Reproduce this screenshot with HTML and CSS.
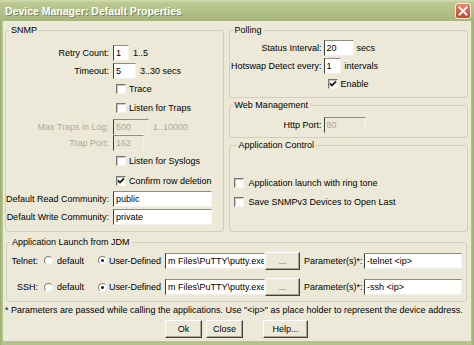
FILE: index.html
```html
<!DOCTYPE html>
<html lang="en">
<head>
  <meta charset="UTF-8" />
  <title>Device Manager: Default Properties</title>
  <link rel="stylesheet" href="styles.css">
</head>
<body>

  <div class="window">
    <div class="titlebar">
      <span class="title">Device Manager: Default Properties</span>
      <span class="close-btn">
        <svg width="10" height="10" viewBox="0 0 10 10"><path d="M1.5 1.5 L8.5 8.5 M8.5 1.5 L1.5 8.5" stroke="#fff" stroke-width="2" stroke-linecap="square"/></svg>
      </span>
    </div>

    <div class="client">
      <div class="top">
        <fieldset class="group snmp">
          <legend>SNMP</legend>
          <div class="form snmp-form">
            <span class="lbl">Retry Count:</span>
            <div class="field"><span class="txt w16">1</span><span class="hint">1..5</span></div>

            <span class="lbl">Timeout:</span>
            <div class="field"><span class="txt w23">5</span><span class="hint">3..30 secs</span></div>

            <span></span>
            <div class="field check"><span class="cb"></span>Trace</div>

            <span></span>
            <div class="field check"><span class="cb"></span>Listen for Traps</div>

            <span class="lbl disabled">Max Traps in Log:</span>
            <div class="field"><span class="txt w36 off">500</span><span class="hint disabled">1..10000</span></div>

            <span class="lbl disabled">Trap Port:</span>
            <div class="field"><span class="txt w31 off">162</span></div>

            <span></span>
            <div class="field check"><span class="cb"></span>Listen for Syslogs</div>

            <span></span>
            <div class="field check"><span class="cb checked"><svg width="8" height="8" viewBox="0 0 8 8"><path d="M1 3.5 L3 5.5 L7 1.5" stroke="#21211c" stroke-width="1.8" fill="none"/></svg></span>Confirm row deletion</div>

            <span class="lbl">Default Read Community:</span>
            <div class="field"><span class="txt w99">public</span></div>

            <span class="lbl">Default Write Community:</span>
            <div class="field"><span class="txt w99">private</span></div>
          </div>
        </fieldset>

        <div class="right-col">
          <fieldset class="group polling">
            <legend>Polling</legend>
            <div class="form polling-form">
              <span class="lbl">Status Interval:</span>
              <div class="field"><span class="txt w30">20</span><span class="hint h3">secs</span></div>

              <span class="lbl">Hotswap Detect every:</span>
              <div class="field"><span class="txt w17">1</span><span class="hint">intervals</span></div>

              <span></span>
              <div class="field check enable"><span class="cb checked"><svg width="8" height="8" viewBox="0 0 8 8"><path d="M1 3.5 L3 5.5 L7 1.5" stroke="#21211c" stroke-width="1.8" fill="none"/></svg></span>Enable</div>
            </div>
          </fieldset>

          <fieldset class="group web">
            <legend>Web Management</legend>
            <div class="form web-form">
              <span class="lbl">Http Port:</span>
              <div class="field"><span class="txt w42 off">80</span></div>
            </div>
          </fieldset>

          <fieldset class="group app">
            <legend>Application Control</legend>
            <div class="app-list">
              <div class="check"><span class="cb"></span>Application launch with ring tone</div>
              <div class="check"><span class="cb"></span>Save SNMPv3 Devices to Open Last</div>
            </div>
          </fieldset>
        </div>
      </div>

      <fieldset class="group launch">
        <legend>Application Launch from JDM</legend>
        <div class="launch-row">
          <span class="row-lbl">Telnet:</span>
          <span class="opt opt-default"><span class="radio"></span>default</span>
          <span class="opt opt-user"><span class="radio on"></span>User-Defined</span>
          <span class="txt path">m Files\PuTTY\putt<span class="caret"></span>y.exe</span>
          <span class="btn browse">...</span>
          <span class="param-lbl">Parameter(s)*:</span>
          <span class="txt param">-telnet &lt;ip&gt;</span>
        </div>
        <div class="launch-row second">
          <span class="row-lbl">SSH:</span>
          <span class="opt opt-default"><span class="radio"></span>default</span>
          <span class="opt opt-user"><span class="radio on"></span>User-Defined</span>
          <span class="txt path">m Files\PuTTY\putty.exe</span>
          <span class="btn browse">...</span>
          <span class="param-lbl">Parameter(s)*:</span>
          <span class="txt param">-ssh &lt;ip&gt;</span>
        </div>
      </fieldset>

      <p class="note">* Parameters are passed while calling the applications. Use "&lt;ip&gt;" as place holder to represent the device address.</p>

      <div class="buttons">
        <span class="btn ok">Ok</span>
        <span class="btn close">Close</span>
        <span class="btn help">Help...</span>
      </div>
    </div>
  </div>

</body>
</html>
```

FILE: styles.css
```css
* {
  box-sizing: border-box;
  margin: 0;
  padding: 0;
}

body {
  width: 474px;
  height: 345px;
  overflow: hidden;
  font-family: 'Liberation Sans', Arial, sans-serif;
  font-size: 9px;
  color: #000;
  background: #ece9d8;
}

.window {
  width: 474px;
  height: 345px;
  display: flex;
  flex-direction: column;
  background: linear-gradient(90deg, #98a86c 0, #b4c28b 2px, #b4c28b 471px, #98a86c 474px);
}

/* title bar */
.titlebar {
  height: 21px;
  flex: none;
  display: flex;
  align-items: center;
  justify-content: space-between;
  padding: 1px 3px 0 5px;
  background: linear-gradient(#d3dcb0 0, #bcc994 3px, #b2c089 12px, #a7b67d 21px);
}

.title {
  color: #fff;
  font-weight: bold;
  font-size: 10.5px;
  text-shadow: 1px 1px 0 #7b8a52;
}

.close-btn {
  width: 16px;
  height: 16px;
  display: flex;
  align-items: center;
  justify-content: center;
  border: 1px solid #f3eee0;
  border-radius: 3px;
  background: linear-gradient(#e98a6e, #d5573c 60%, #c4472f);
}

/* client area */
.client {
  flex: 1;
  margin: 0 3px 4px 3px;
  padding: 4px 3px 0 2px;
  background: #ece9d8;
  display: flex;
  flex-direction: column;
}

.top {
  display: flex;
  gap: 5px;
}

.group {
  border: 1px solid #d0d0bf;
  border-radius: 3px;
  min-width: 0;
}

.group legend {
  margin-left: 3px;
  padding: 0 2px;
  line-height: 11px;
}

.form {
  display: grid;
  align-items: center;
}

.lbl {
  text-align: right;
  white-space: nowrap;
}

.field {
  display: flex;
  align-items: center;
  gap: 4px;
}

.hint.h3 {
  margin-left: -1px;
}

.disabled {
  color: #aca899;
}

.check {
  display: flex;
  align-items: center;
  gap: 3px;
}

/* SNMP */
.snmp {
  width: 219px;
  padding: 8px 0 5px 0;
}

.snmp-form {
  grid-template-columns: 107px 1fr;
  grid-template-rows: 18px 18px 17px 21px 17px 16px 20px 19px 18px 18px;
}

.snmp-form .lbl {
  padding-right: 4px;
}

.snmp-form .check {
  margin-left: 3px;
}

/* right column */
.right-col {
  width: 240px;
  display: flex;
  flex-direction: column;
}

.polling {
  padding: 3px 0 4px 0;
}

.polling-form {
  grid-template-columns: 94px 1fr;
  grid-template-rows: 17px 19px 18px;
}

.polling-form .lbl,
.web-form .lbl {
  padding-right: 2px;
}

.enable {
  margin-left: 4px;
}

.web {
  margin-top: 2px;
  padding: 5px 0 4px 0;
}

.web-form {
  grid-template-columns: 94px 1fr;
  grid-template-rows: 17px;
}

.app {
  flex: 1;
  margin-top: 2px;
  padding: 22px 0 0 4px;
}

.app-list .check {
  height: 19px;
  gap: 5px;
}

/* controls */
.txt {
  display: flex;
  align-items: center;
  height: 16px;
  padding: 0 2px;
  background: #fff;
  border: 1px solid;
  border-color: #8d8d84 #f4f3ec #f0efe6 #3e3e3a;
  white-space: nowrap;
  overflow: hidden;
}

.txt.off {
  background: #ece9d8;
  color: #aca899;
}

.w16 { width: 16px; }
.w17 { width: 17px; }
.w23 { width: 23px; }
.w30 { width: 30px; }
.w31 { width: 31px; }
.w36 { width: 36px; }
.w42 { width: 42px; }
.w99 { width: 99px; }

.cb {
  width: 10px;
  height: 10px;
  flex: none;
  display: flex;
  align-items: center;
  justify-content: center;
  background: #fff;
  border: 1px solid;
  border-color: #76766e #f4f3ec #f4f3ec #76766e;
  box-shadow: inset 1px 1px 0 #c9c7ba;
}

.radio {
  width: 9px;
  height: 9px;
  flex: none;
  display: flex;
  align-items: center;
  justify-content: center;
  border-radius: 50%;
  background: #fff;
  border: 1px solid;
  border-color: #808078 #f4f3ec #f4f3ec #808078;
}

.radio.on::after {
  content: "";
  width: 3px;
  height: 3px;
  border-radius: 50%;
  background: #1a1a1a;
}

.btn {
  display: flex;
  align-items: center;
  justify-content: center;
  height: 18px;
  background: #ece9d8;
  border: 1px solid;
  border-color: #fff #404040 #404040 #fff;
  box-shadow: inset -1px -1px 0 #a7a595;
}

/* application launch */
.launch {
  margin: 5px 1px 0 1px;
  padding: 3px 0 5px 0;
}

.launch-row {
  display: flex;
  align-items: center;
  height: 19px;
}

.launch-row.second {
  margin-top: 8px;
  height: 18px;
}

.row-lbl {
  width: 32px;
  text-align: right;
  padding-right: 1px;
}

.opt {
  display: flex;
  align-items: center;
  gap: 4px;
}

.opt-default {
  width: 54px;
  margin-left: 5px;
}

.opt-user {
  width: 67px;
  gap: 2px;
  letter-spacing: -0.1px;
}

.path {
  width: 100px;
}

.caret {
  display: inline-block;
  width: 1px;
  height: 11px;
  background: #000;
}

.browse {
  width: 35px;
  color: #55554c;
}

.param-lbl {
  width: 64px;
  padding-left: 4px;
}

.param {
  width: 98px;
}

/* footer */
.note {
  margin-top: 2px;
  line-height: 12px;
  white-space: nowrap;
}

.buttons {
  display: flex;
  justify-content: center;
  margin-top: 4px;
}

.ok { width: 37px; }
.close { width: 37px; margin-left: 4px; }
.help { width: 45px; margin-left: 20px; }
```
